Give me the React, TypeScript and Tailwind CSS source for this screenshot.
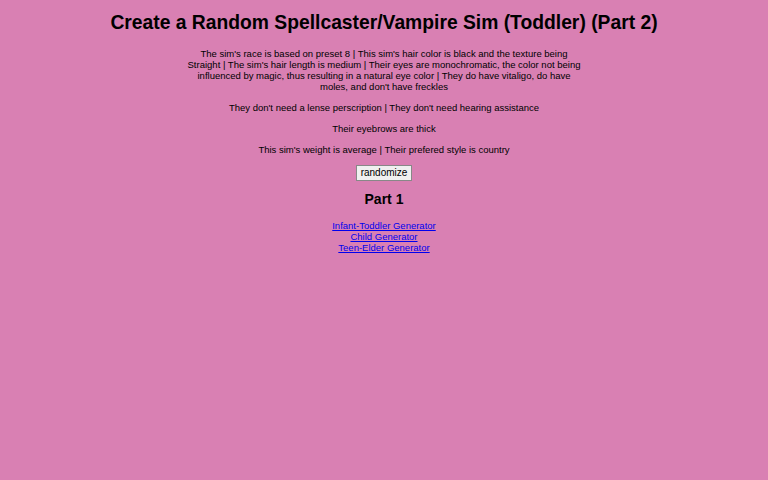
const lines = [
  "The sim's race is based on preset 8 | This sim's hair color is black and the texture being Straight | The sim's hair length is medium | Their eyes are monochromatic, the color not being influenced by magic, thus resulting in a natural eye color | They do have vitaligo, do have moles, and don't have freckles",
  "They don't need a lense perscription | They don't need hearing assistance",
  "Their eyebrows are thick",
  "This sim's weight is average | Their prefered style is country",
];

const links = ["Infant-Toddler Generator", "Child Generator", "Teen-Elder Generator"];

export default function App() {
  return (
    <div className="min-h-[480px] w-full bg-[#d980b3] text-black text-center font-['Liberation_Sans',Arial,sans-serif]">
      <h1 className="pt-[11px] text-[19.3px] leading-[24px] font-bold">
        Create a Random Spellcaster/Vampire Sim (Toddler) (Part 2)
      </h1>
      <div className="mx-auto mt-[13px] w-[400px] text-[9.5px] leading-[11px] space-y-[10px]">
        {lines.map((t, i) => (
          <p key={i}>{t}</p>
        ))}
      </div>
      <button className="mt-[10px] border border-[#888] bg-[#f0f0f0] px-[4px] py-[1px] text-[10px] leading-[12px]">
        randomize
      </button>
      <h2 className="mt-[7px] text-[14px] leading-[18px] font-bold">Part 1</h2>
      <div className="mt-[12px] flex flex-col items-center text-[9.5px] leading-[11px]">
        {links.map((l) => (
          <a key={l} href="#" className="text-[#0000ee] underline">
            {l}
          </a>
        ))}
      </div>
    </div>
  );
}
